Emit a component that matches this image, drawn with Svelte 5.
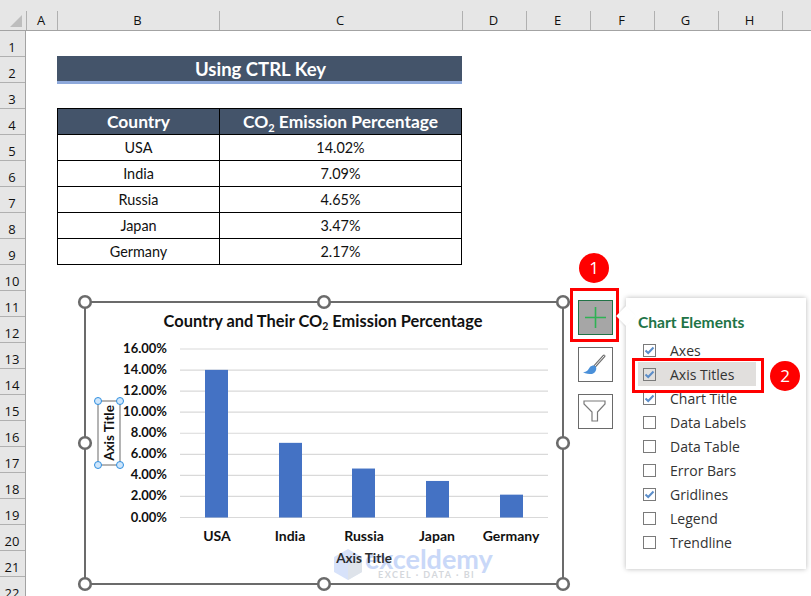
<script>
  const cols = [
    { name: 'A', w: 31 }, { name: 'B', w: 162 }, { name: 'C', w: 243 }, { name: 'D', w: 64 },
    { name: 'E', w: 64 }, { name: 'F', w: 64 }, { name: 'G', w: 64 }, { name: 'H', w: 64 }, { name: '', w: 30 }
  ];
  const rows = Array.from({ length: 22 }, (_, i) => i + 1);
  const data = [
    ['USA', '14.02%'], ['India', '7.09%'], ['Russia', '4.65%'], ['Japan', '3.47%'], ['Germany', '2.17%']
  ];
  const ticks = [16, 14, 12, 10, 8, 6, 4, 2, 0];
  const y0 = 517.5, unit = 10.53;
  const bars = [
    { label: 'USA', v: 14.02, x: 205, c: 217 }, { label: 'India', v: 7.09, x: 279, c: 290 },
    { label: 'Russia', v: 4.65, x: 352, c: 364 }, { label: 'Japan', v: 3.47, x: 426, c: 437 },
    { label: 'Germany', v: 2.17, x: 500, c: 511 }
  ];
  const handles = [[85, 302], [324, 302], [563, 302], [85, 443], [563, 443], [85, 584], [324, 584], [563, 584]];
  const blue = [[98, 401], [120, 401], [98, 465], [120, 465]];
  const elements = [
    ['Axes', true], ['Axis Titles', true], ['Chart Title', true], ['Data Labels', false], ['Data Table', false],
    ['Error Bars', false], ['Gridlines', true], ['Legend', false], ['Trendline', false]
  ];
</script>

<div class="app">
  <header class="colbar">
    <div class="corner"><span class="tri"></span></div>
    {#each cols as c}
      <div class="col" style="width:{c.w}px">{c.name}</div>
    {/each}
  </header>
  <div class="main">
    <div class="rowbar">
      {#each rows as r}<div class="row">{r}</div>{/each}
    </div>
    <div class="sheet">
      <h1 class="title">Using CTRL Key</h1>
      <table>
        <thead>
          <tr><th class="c1">Country</th><th class="c2">CO<sub>2</sub> Emission Percentage</th></tr>
        </thead>
        <tbody>
          {#each data as d}
            <tr><td>{d[0]}</td><td>{d[1]}</td></tr>
          {/each}
        </tbody>
      </table>
    </div>
  </div>

  <svg class="chart" width="811" height="596" viewBox="0 0 811 596">
    <rect x="85" y="302" width="478" height="282" fill="#fff" stroke="#6b6b6b" stroke-width="2" />
    <text class="ctitle" x="323" y="327" text-anchor="middle">Country and Their CO<tspan font-size="10.500" dy="3">2</tspan><tspan dy="-3">&#160;Emission Percentage</tspan></text>
    {#each ticks as t}
      <line x1="180" x2="548" y1={y0 - t * unit} y2={y0 - t * unit} stroke="#d9d9d9" stroke-width="1.2" />
      <text class="axis" x="167" y={y0 - t * unit + 4} text-anchor="end">{t.toFixed(2)}%</text>
    {/each}
    {#each bars as b}
      <rect x={b.x} y={y0 - b.v * unit} width="23" height={b.v * unit} fill="#4472c4" />
      <text class="axis cat" x={b.c} y="541" text-anchor="middle">{b.label}</text>
    {/each}

    <g class="mark">
      <path d="M348 549l14 8v15l-14 8-14-8v-15z" fill="#c9d8f8" opacity=".75" />
      <path d="M348 565l14-8v15l-14 8z" fill="#dfe3e8" opacity=".9" />
      <text class="wm" x="365" y="569">exceldemy</text>
      <text class="wms" x="378" y="578">EXCEL · DATA · BI</text>
    </g>
    <text class="axis ax-t" x="364" y="563" text-anchor="middle" opacity=".88">Axis Title</text>

    <rect x="98" y="401" width="22" height="64" fill="#fff" fill-opacity="0" stroke="#6b6b6b" stroke-width="1" />
    <text class="axis ax-t" transform="translate(114 433) rotate(-90)" text-anchor="middle">Axis Title</text>
    {#each blue as h}
      <circle cx={h[0]} cy={h[1]} r="3.5" fill="#cfe6fb" stroke="#2f8fe0" stroke-width="1" />
    {/each}
    {#each handles as h}
      <circle cx={h[0]} cy={h[1]} r="5.8" fill="#fff" stroke="#6b6b6b" stroke-width="2.6" />
    {/each}
  </svg>

  <div class="badge b1">1</div>
  <div class="tools">
    <button class="tool plus" aria-label="Chart Elements">
      <svg width="33" height="33" viewBox="0 0 33 33"><path d="M16.500 6v21M6 16.500h21" stroke="#2fb254" stroke-width="1.600" fill="none" /></svg>
    </button>
    <button class="tool" aria-label="Chart Styles">
      <svg width="33" height="33" viewBox="0 0 33 33">
        <path d="M25 8 16 18" stroke="#6f6f6f" stroke-width="3" fill="none" stroke-linecap="round" />
        <path d="M25 8 16 18" stroke="#f2f2f2" stroke-width="1" fill="none" stroke-linecap="round" />
        <path d="M4 24c4 0 5-2 7-5 2-2 5-2 6 0 1 3-1 6-4 7-3 0-6 0-9-2z" fill="#4a90d9" />
      </svg>
    </button>
    <button class="tool" aria-label="Chart Filters">
      <svg width="33" height="33" viewBox="0 0 33 33"><path d="M5 6H26V9L18.500 17V26H13V17L5 9Z" fill="#fff" stroke="#7a7a7a" stroke-width="1.200" /></svg>
    </button>
  </div>
  <div class="redbox rb1"></div>

  <aside class="panel">
    <span class="arrow"></span>
    <h2>Chart Elements</h2>
    <ul>
      {#each elements as e, i}
        <li class:hot={i === 1}>
          <span class="check">
            {#if e[1]}
              <svg width="13" height="13" viewBox="0 0 13 13"><path d="M2.500 6.500 5.200 9 10.500 3.500" fill="none" stroke="#5b8dc9" stroke-width="2" /></svg>
            {/if}
          </span>
          <span class="lab">{e[0]}</span>
        </li>
      {/each}
    </ul>
  </aside>
  <div class="redbox rb2"></div>
  <div class="badge b2">2</div>
</div>

<style>
  :global(body) { margin: 0; background: #fff; }
  .app {
    position: relative; width: 811px; height: 596px; overflow: hidden; background: #fff;
    font-family: "Lato", "Liberation Sans", sans-serif; color: #111;
  }
  .colbar { display: flex; height: 31px; box-sizing: border-box; background: #e6e6e6; border-bottom: 1.500px solid #a3a3a3; }
  .corner { width: 26px; position: relative; flex: none; }
  .tri {
    position: absolute; right: 4px; bottom: 3px; width: 0; height: 0;
    border-left: 12px solid transparent; border-bottom: 12px solid #bdbdbd;
  }
  .col {
    flex: none; box-sizing: border-box; text-align: center; font-size: 13px; line-height: 19px; padding: 11px 1px 0 0;
    font-family: "Open Sans", sans-serif; position: relative;
  }
  .col::before { content: ""; position: absolute; left: 0; top: 11px; bottom: 0; width: 1px; background: #b0b0b0; }
  .main { display: flex; }
  .rowbar { width: 26px; flex: none; background: #e6e6e6; box-sizing: border-box; border-right: 1.500px solid #a3a3a3; }
  .row {
    height: 26px; box-sizing: border-box; border-bottom: 1px solid #b0b0b0; text-align: center; padding: 6px 1px 0 0;
    font-size: 13px; line-height: 20px; font-family: "Open Sans", sans-serif;
  }
  .sheet { flex: 1; padding: 25px 0 0 31px; }
  .title {
    width: 405px; height: 28px; margin: 0; padding-left: 2px; box-sizing: border-box; background: #44546a; color: #fff;
    border-bottom: 3px solid #8ea9db; text-align: center; font-size: 18.500px; line-height: 27px; font-weight: 700;
  }
  table { border-collapse: collapse; margin-top: 24px; width: 405px; table-layout: fixed; }
  th, td { border: 1px solid #000; padding: 0; height: 26px; text-align: center; box-sizing: border-box; }
  th { background: #44546a; color: #fff; font-size: 17.400px; font-weight: 700; }
  td { font-size: 14.400px; }
  .c1 { width: 162px; }
  sub { font-size: 11px; line-height: 0; }
  .chart { position: absolute; left: 0; top: 0; }
  .chart text { font-family: "Lato", sans-serif; fill: #111; }
  .chart .ctitle { font-size: 16.400px; font-weight: 700; }
  .chart .axis { font-size: 13px; font-weight: 700; }
  .chart .cat { font-size: 14px; }
  .chart .ax-t { font-size: 13.500px; }
  .chart .wm { font-size: 27px; font-weight: 700; fill: #c9d8f8; }
  .chart .wms { font-size: 9px; letter-spacing: 1.500px; font-weight: 700; fill: #d4d7dc; }
  .tools { position: absolute; left: 578px; top: 300px; display: flex; flex-direction: column; gap: 12px; }
  .tool {
    width: 35px; height: 35px; padding: 0; margin: 0; box-sizing: border-box; background: #fff;
    border: 1px solid #6a6a6a; display: block;
  }
  .tool svg { display: block; }
  .plus { background: #a6a6a6; border-color: #217346; }
  .redbox { position: absolute; box-sizing: border-box; border: 3px solid #f00; }
  .rb1 { left: 570px; top: 288px; width: 49px; height: 54px; }
  .rb2 { left: 632px; top: 358px; width: 132px; height: 35px; }
  .badge {
    position: absolute; width: 30px; height: 30px; border-radius: 50%; background: #f00; color: #fff;
    font-family: "Open Sans", sans-serif; font-size: 17px; line-height: 30px; text-align: center;
  }
  .b1 { left: 579px; top: 253px; }
  .b2 { left: 770px; top: 361px; }
  .panel {
    position: absolute; left: 626px; top: 298px; width: 180px; height: 271px; box-sizing: border-box; background: #fff;
    padding: 14px 12px 0; box-shadow: 0 0 5px rgba(0, 0, 0, .28); font-family: "Open Sans", sans-serif;
  }
  .arrow {
    position: absolute; left: -7px; top: 11px; width: 14px; height: 14px; background: #fff; transform: rotate(45deg);
    box-shadow: -1px 1px 2px rgba(0, 0, 0, .1);
  }
  h2 { margin: 0 0 6px; position: relative; font-family: "Lato", sans-serif; font-size: 15.600px; line-height: 20px; font-weight: 700; color: #217346; }
  ul { list-style: none; margin: 0; padding: 0; }
  li { height: 24px; display: flex; align-items: center; padding-left: 5px; font-size: 14px; color: #333; }
  li.hot { background: #e1dfdd; width: 113px; }
  .check { width: 13px; height: 13px; flex: none; box-sizing: border-box; border: 1px solid #7a7a7a; background: #fff; position: relative; }
  .hot .check { background: #e1dfdd; }
  .check svg { position: absolute; left: -1px; top: -1px; }
  .lab { margin-left: 14px; }
</style>
